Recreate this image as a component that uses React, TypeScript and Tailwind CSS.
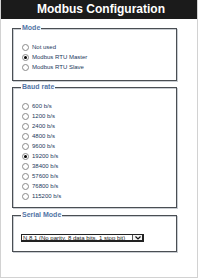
import React from "react";

function Radio({ label, checked }: { label: string; checked?: boolean }) {
  return (
    <div className="flex h-[10px] items-center">
      <span className="ml-[1px] flex h-[7px] w-[7px] items-center justify-center rounded-full border border-[#8a8a8a] bg-white">
        {checked && <span className="h-[3px] w-[3px] rounded-full bg-black" />}
      </span>
      <span className="ml-[3px] text-[6px] leading-[10px] text-[#22385c]">{label}</span>
    </div>
  );
}

function Group({
  title,
  children,
  className,
}: {
  title: string;
  children: React.ReactNode;
  className?: string;
}) {
  return (
    <fieldset
      className={
        "ml-[11px] w-[165px] border border-[#4a4e53] px-[8px] shadow-[1px_1px_0_#c9cdd2,inset_1px_1px_0_#c9cdd2] " +
        (className ?? "")
      }
    >
      <legend className="bg-white px-[1px] text-[7px] font-bold leading-[8px] text-[#5275a6]">
        {title}
      </legend>
      {children}
    </fieldset>
  );
}

export default function App() {
  const bauds = ["600", "1200", "2400", "4800", "9600", "19200", "38400", "57600", "76800", "115200"];
  return (
    <div
      className="flex h-[278px] w-[198px] flex-col border-x border-b border-[#d2d2d2] bg-white"
      style={{ fontFamily: '"Liberation Sans", Arial, sans-serif' }}
    >
      <div className="flex h-[19px] items-center justify-center bg-[#1b1b1b] pl-[4px]">
        <span className="text-[12px] font-bold leading-[19px] text-white">Modbus Configuration</span>
      </div>

      <Group title="Mode" className="mt-[5px] pt-[10px] pb-[8px]">
        <Radio label="Not used" />
        <Radio label="Modbus RTU Master" checked />
        <Radio label="Modbus RTU Slave" />
      </Group>

      <Group title="Baud rate" className="mt-[2px] pt-[10px] pb-[6px]">
        {bauds.map((b) => (
          <Radio key={b} label={`${b} b/s`} checked={b === "19200"} />
        ))}
      </Group>

      <Group title="Serial Mode" className="mt-[3px] pt-[15px] pb-[9px]">
        <div className="flex h-[8px] w-[123px] items-stretch border border-r-2 border-b-2 border-[#222] bg-white">
          <span className="flex-1 overflow-hidden whitespace-nowrap pl-[1px] text-[6px] leading-[6px] text-[#1a1a1a]">
            N,8,1 (No parity, 8 data bits, 1 stop bit)
          </span>
          <span className="flex w-[10px] items-center justify-center border-l border-[#555] bg-[#f4f4f4]">
            <svg width="6" height="4" viewBox="0 0 6 4">
              <path d="M0.5 0.5 L3 3 L5.5 0.5" fill="none" stroke="#111" strokeWidth="1.2" />
            </svg>
          </span>
        </div>
      </Group>
    </div>
  );
}
